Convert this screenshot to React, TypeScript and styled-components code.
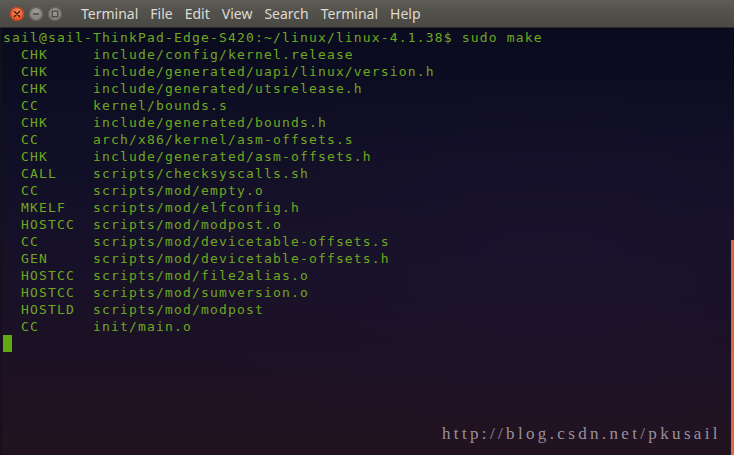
import React from "react";
import styled, { createGlobalStyle } from "styled-components";

const Global = createGlobalStyle`
  html, body { margin: 0; padding: 0; background: #1a1022; }
  #root { width: 734px; height: 455px; }
`;

const Page = styled.div`
  position: relative;
  width: 734px;
  height: 455px;
  display: flex;
  flex-direction: column;
  overflow: hidden;
`;

const TitleBar = styled.div`
  height: 28px;
  flex: none;
  display: flex;
  align-items: center;
  background: linear-gradient(180deg, #5e5c55 0%, #53514b 45%, #4a4843 100%);
  border-bottom: 1px solid #2c2b28;
  box-sizing: border-box;
  padding-left: 10px;
`;

const Buttons = styled.div`
  display: flex;
  gap: 5px;
  align-items: center;
`;

const CircleButton = styled.div<{ $kind: "close" | "plain" }>`
  width: 14px;
  height: 14px;
  border-radius: 50%;
  display: flex;
  align-items: center;
  justify-content: center;
  box-shadow: inset 0 0 0 1px ${(p) => (p.$kind === "close" ? "#b8401c" : "#5f5d57")};
  background: ${(p) =>
    p.$kind === "close"
      ? "radial-gradient(circle at 50% 35%, #f58a5c 0%, #e95a2c 60%, #d44a1c 100%)"
      : "radial-gradient(circle at 50% 35%, #9d9b94 0%, #85837c 60%, #77756f 100%)"};
`;

const Menu = styled.div`
  display: flex;
  gap: 12px;
  margin-left: 19px;
  font-family: "Noto Sans", "Open Sans", sans-serif;
  font-size: 14px;
  color: #dfdbd2;
  line-height: 28px;
`;

const MenuItem = styled.span``;

const Body = styled.div`
  flex: 1;
  display: flex;
  background:
    radial-gradient(ellipse 60% 45% at 75% 55%, rgba(30, 20, 48, 0.55) 0%, rgba(30, 20, 48, 0) 100%),
    linear-gradient(180deg, #0a0b1f 0%, #100f26 30%, #171128 55%, #1d1124 80%, #22131f 100%);
`;

const LeftEdge = styled.div`
  width: 2px;
  flex: none;
  background: rgba(20, 18, 24, 0.8);
`;

const Terminal = styled.div`
  flex: 1;
  padding: 1px 0 0 1px;
  font-family: "DejaVu Sans Mono", monospace;
  font-size: 13px;
  letter-spacing: 1.17px;
  line-height: 17px;
  color: #6ea81f;
`;

const Line = styled.div`
  white-space: pre;
  height: 17px;
`;

const Cursor = styled.div`
  width: 9px;
  height: 17px;
  background: #5fa912;
`;

const RightEdge = styled.div`
  width: 3px;
  flex: none;
  background: linear-gradient(180deg, rgba(0, 0, 0, 0) 212px, #d3663f 212px, #d86c44 100%);
`;

const Watermark = styled.div`
  position: absolute;
  left: 442px;
  top: 424px;
  font-family: "Liberation Serif", "DejaVu Serif", serif;
  font-size: 17px;
  line-height: 20px;
  letter-spacing: 3.35px;
  color: #9a909c;
  white-space: pre;
`;

const lines: [string, string][] = [
  ["CHK", "include/config/kernel.release"],
  ["CHK", "include/generated/uapi/linux/version.h"],
  ["CHK", "include/generated/utsrelease.h"],
  ["CC", "kernel/bounds.s"],
  ["CHK", "include/generated/bounds.h"],
  ["CC", "arch/x86/kernel/asm-offsets.s"],
  ["CHK", "include/generated/asm-offsets.h"],
  ["CALL", "scripts/checksyscalls.sh"],
  ["CC", "scripts/mod/empty.o"],
  ["MKELF", "scripts/mod/elfconfig.h"],
  ["HOSTCC", "scripts/mod/modpost.o"],
  ["CC", "scripts/mod/devicetable-offsets.s"],
  ["GEN", "scripts/mod/devicetable-offsets.h"],
  ["HOSTCC", "scripts/mod/file2alias.o"],
  ["HOSTCC", "scripts/mod/sumversion.o"],
  ["HOSTLD", "scripts/mod/modpost"],
  ["CC", "init/main.o"],
];

const menu = ["Terminal", "File", "Edit", "View", "Search", "Terminal", "Help"];

export default function App() {
  return (
    <Page>
      <Global />
      <TitleBar>
        <Buttons>
          <CircleButton $kind="close">
            <svg width="8" height="8" viewBox="0 0 8 8">
              <path d="M1.5 1.5 L6.5 6.5 M6.5 1.5 L1.5 6.5" stroke="#3b1a10" strokeWidth="1.4" strokeLinecap="round" />
            </svg>
          </CircleButton>
          <CircleButton $kind="plain">
            <svg width="8" height="8" viewBox="0 0 8 8">
              <path d="M1 4 L7 4" stroke="#45433e" strokeWidth="1.4" />
            </svg>
          </CircleButton>
          <CircleButton $kind="plain">
            <svg width="8" height="8" viewBox="0 0 8 8">
              <rect x="1.2" y="1.2" width="5.6" height="5.6" fill="none" stroke="#45433e" strokeWidth="1.2" />
            </svg>
          </CircleButton>
        </Buttons>
        <Menu>
          {menu.map((m, i) => (
            <MenuItem key={i}>{m}</MenuItem>
          ))}
        </Menu>
      </TitleBar>
      <Body>
        <LeftEdge />
        <Terminal>
          <Line>sail@sail-ThinkPad-Edge-S420:~/linux/linux-4.1.38$ sudo make</Line>
          {lines.map(([tag, path], i) => (
            <Line key={i}>{"  " + tag.padEnd(7, " ") + " " + path}</Line>
          ))}
          <Cursor />
        </Terminal>
        <RightEdge />
      </Body>
      <Watermark>http://blog.csdn.net/pkusail</Watermark>
    </Page>
  );
}
